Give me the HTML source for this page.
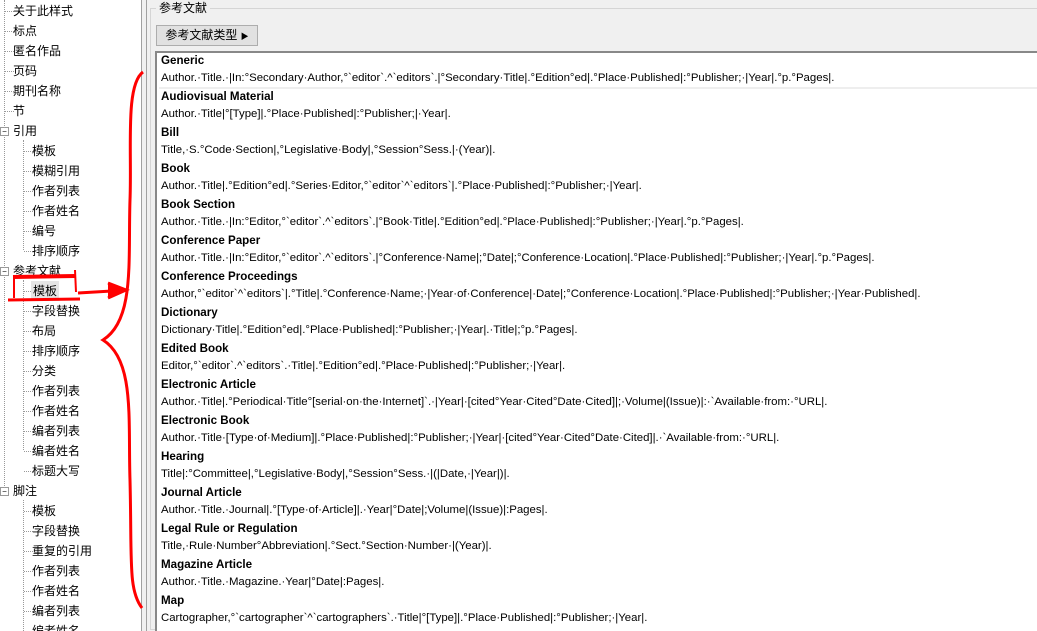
<!DOCTYPE html>
<html style="overflow:hidden;height:631px"><head><meta charset="utf-8"><style>
body{margin:0;width:1037px;height:631px;overflow:hidden;background:#f0f0f0;font-family:"Liberation Sans","Noto Sans CJK SC",sans-serif;position:relative}
#tree{position:absolute;left:0;top:0;width:141px;height:631px;background:#fff;border-right:1px solid #a0a0a0}
#sep{position:absolute;left:146px;top:0;width:1px;height:631px;background:#a0a0a0}
.t{position:absolute;font-size:12px;line-height:20px;white-space:nowrap;color:#000}
.h{position:absolute;border-top:1px dotted #999;width:9px}
.v{position:absolute;border-left:1px dotted #999}
.pm{position:absolute;left:0;width:7px;height:7px;border:1px solid #999;background:#fff;font-size:8px;line-height:7px;text-align:center}
#grp{position:absolute;left:150px;top:8px;width:900px;height:620px;border:1px solid #d5d5d5}
#glab{position:absolute;left:156px;top:0;font-size:12px;background:#f0f0f0;padding:0 3px;line-height:16px}
#btn{position:absolute;left:156px;top:25px;width:100px;height:19px;border:1px solid #adadad;background:#e1e1e1;font-size:12px;line-height:19px;text-align:center}
#box{position:absolute;left:155px;top:51px;width:890px;height:578px;background:#fff;border-top:2px solid #888;border-left:2px solid #888;overflow:hidden}
.e{position:absolute;left:4px;font-size:11.4px;white-space:nowrap}
.e b{display:block;line-height:16px;height:16px;font-weight:bold;font-size:11.6px}
.e span{display:block;line-height:18px;height:18px}
</style></head><body>
<div id="tree">
<div class="v" style="left:4px;top:0;height:490px"></div>
<div class="v" style="left:23px;top:140px;height:110px"></div>
<div class="v" style="left:23px;top:280px;height:170px"></div>
<div class="v" style="left:23px;top:500px;height:131px"></div>
<div class="h" style="left:5px;top:11px"></div><div class="t" style="left:13px;top:1px">关于此样式</div>
<div class="h" style="left:5px;top:31px"></div><div class="t" style="left:13px;top:21px">标点</div>
<div class="h" style="left:5px;top:51px"></div><div class="t" style="left:13px;top:41px">匿名作品</div>
<div class="h" style="left:5px;top:71px"></div><div class="t" style="left:13px;top:61px">页码</div>
<div class="h" style="left:5px;top:91px"></div><div class="t" style="left:13px;top:81px">期刊名称</div>
<div class="h" style="left:5px;top:111px"></div><div class="t" style="left:13px;top:101px">节</div>
<div class="pm" style="top:127px">−</div><div class="t" style="left:13px;top:121px">引用</div>
<div class="h" style="left:24px;top:151px"></div><div class="t" style="left:32px;top:141px">模板</div>
<div class="h" style="left:24px;top:171px"></div><div class="t" style="left:32px;top:161px">模糊引用</div>
<div class="h" style="left:24px;top:191px"></div><div class="t" style="left:32px;top:181px">作者列表</div>
<div class="h" style="left:24px;top:211px"></div><div class="t" style="left:32px;top:201px">作者姓名</div>
<div class="h" style="left:24px;top:231px"></div><div class="t" style="left:32px;top:221px">编号</div>
<div class="h" style="left:24px;top:251px"></div><div class="t" style="left:32px;top:241px">排序顺序</div>
<div class="pm" style="top:267px">−</div><div class="t" style="left:13px;top:261px">参考文献</div>
<div class="h" style="left:24px;top:291px"></div><div class="t" style="left:31px;top:281px;background:#e5e5e5;padding:0 2px">模板</div>
<div class="h" style="left:24px;top:311px"></div><div class="t" style="left:32px;top:301px">字段替换</div>
<div class="h" style="left:24px;top:331px"></div><div class="t" style="left:32px;top:321px">布局</div>
<div class="h" style="left:24px;top:351px"></div><div class="t" style="left:32px;top:341px">排序顺序</div>
<div class="h" style="left:24px;top:371px"></div><div class="t" style="left:32px;top:361px">分类</div>
<div class="h" style="left:24px;top:391px"></div><div class="t" style="left:32px;top:381px">作者列表</div>
<div class="h" style="left:24px;top:411px"></div><div class="t" style="left:32px;top:401px">作者姓名</div>
<div class="h" style="left:24px;top:431px"></div><div class="t" style="left:32px;top:421px">编者列表</div>
<div class="h" style="left:24px;top:451px"></div><div class="t" style="left:32px;top:441px">编者姓名</div>
<div class="h" style="left:24px;top:471px"></div><div class="t" style="left:32px;top:461px">标题大写</div>
<div class="pm" style="top:487px">−</div><div class="t" style="left:13px;top:481px">脚注</div>
<div class="h" style="left:24px;top:511px"></div><div class="t" style="left:32px;top:501px">模板</div>
<div class="h" style="left:24px;top:531px"></div><div class="t" style="left:32px;top:521px">字段替换</div>
<div class="h" style="left:24px;top:551px"></div><div class="t" style="left:32px;top:541px">重复的引用</div>
<div class="h" style="left:24px;top:571px"></div><div class="t" style="left:32px;top:561px">作者列表</div>
<div class="h" style="left:24px;top:591px"></div><div class="t" style="left:32px;top:581px">作者姓名</div>
<div class="h" style="left:24px;top:611px"></div><div class="t" style="left:32px;top:601px">编者列表</div>
<div class="t" style="left:32px;top:621px">编者姓名</div>
</div>
<div id="sep"></div>
<div id="grp"></div>
<div id="glab">参考文献</div>
<div id="btn">参考文献类型 <span style="font-size:8px">▶</span></div>
<div id="box">
<div style="position:absolute;left:2px;top:16px;width:890px;height:18px;border-bottom:2px solid #eee;background:#fff"></div>
<div class="e" style="top:0"><b>Generic</b><span style="position:relative">Author.·Title.·|In:°Secondary·Author,°`editor`.^`editors`.|°Secondary·Title|.°Edition°ed|.°Place·Published|:°Publisher;·|Year|.°p.°Pages|.</span></div>
<div class="e" style="top:36px"><b>Audiovisual Material</b><span>Author.·Title|°[Type]|.°Place·Published|:°Publisher;|·Year|.</span></div>
<div class="e" style="top:72px"><b>Bill</b><span>Title,·S.°Code·Section|,°Legislative·Body|,°Session°Sess.|·(Year)|.</span></div>
<div class="e" style="top:108px"><b>Book</b><span>Author.·Title|.°Edition°ed|.°Series·Editor,°`editor`^`editors`|.°Place·Published|:°Publisher;·|Year|.</span></div>
<div class="e" style="top:144px"><b>Book Section</b><span>Author.·Title.·|In:°Editor,°`editor`.^`editors`.|°Book·Title|.°Edition°ed|.°Place·Published|:°Publisher;·|Year|.°p.°Pages|.</span></div>
<div class="e" style="top:180px"><b>Conference Paper</b><span>Author.·Title.·|In:°Editor,°`editor`.^`editors`.|°Conference·Name|;°Date|;°Conference·Location|.°Place·Published|:°Publisher;·|Year|.°p.°Pages|.</span></div>
<div class="e" style="top:216px"><b>Conference Proceedings</b><span>Author,°`editor`^`editors`|.°Title|.°Conference·Name;·|Year·of·Conference|·Date|;°Conference·Location|.°Place·Published|:°Publisher;·|Year·Published|.</span></div>
<div class="e" style="top:252px"><b>Dictionary</b><span>Dictionary·Title|.°Edition°ed|.°Place·Published|:°Publisher;·|Year|.·Title|;°p.°Pages|.</span></div>
<div class="e" style="top:288px"><b>Edited Book</b><span>Editor,°`editor`.^`editors`.·Title|.°Edition°ed|.°Place·Published|:°Publisher;·|Year|.</span></div>
<div class="e" style="top:324px"><b>Electronic Article</b><span>Author.·Title|.°Periodical·Title°[serial·on·the·Internet]`.·|Year|·[cited°Year·Cited°Date·Cited]|;·Volume|(Issue)|:·`Available·from:·°URL|.</span></div>
<div class="e" style="top:360px"><b>Electronic Book</b><span>Author.·Title·[Type·of·Medium]|.°Place·Published|:°Publisher;·|Year|·[cited°Year·Cited°Date·Cited]|.·`Available·from:·°URL|.</span></div>
<div class="e" style="top:396px"><b>Hearing</b><span>Title|:°Committee|,°Legislative·Body|,°Session°Sess.·|(|Date,·|Year|)|.</span></div>
<div class="e" style="top:432px"><b>Journal Article</b><span>Author.·Title.·Journal|.°[Type·of·Article]|.·Year|°Date|;Volume|(Issue)|:Pages|.</span></div>
<div class="e" style="top:468px"><b>Legal Rule or Regulation</b><span>Title,·Rule·Number°Abbreviation|.°Sect.°Section·Number·|(Year)|.</span></div>
<div class="e" style="top:504px"><b>Magazine Article</b><span>Author.·Title.·Magazine.·Year|°Date|:Pages|.</span></div>
<div class="e" style="top:540px"><b>Map</b><span>Cartographer,°`cartographer`^`cartographers`.·Title|°[Type]|.°Place·Published|:°Publisher;·|Year|.</span></div>
</div>
<svg width="1037" height="631" style="position:absolute;left:0;top:0" fill="none" stroke="#f00" stroke-width="3">
<path d="M143,72 C125,85 132,150 130,200 C128,260 135,320 103,340 C135,360 128,420 130,480 C132,560 128,590 142,608"/>
<path d="M13,277 L75,276" stroke-width="4"/>
<path d="M75,270 L76,292" stroke-width="2"/>
<path d="M14,278 L14,298" stroke-width="2"/>
<path d="M8,300 L80,299" stroke-width="3"/>
<path d="M78,293 L112,291" stroke-width="3"/>
<path d="M108,283 L126,290 L108,298" fill="#f00"/>
</svg>
</body></html>
